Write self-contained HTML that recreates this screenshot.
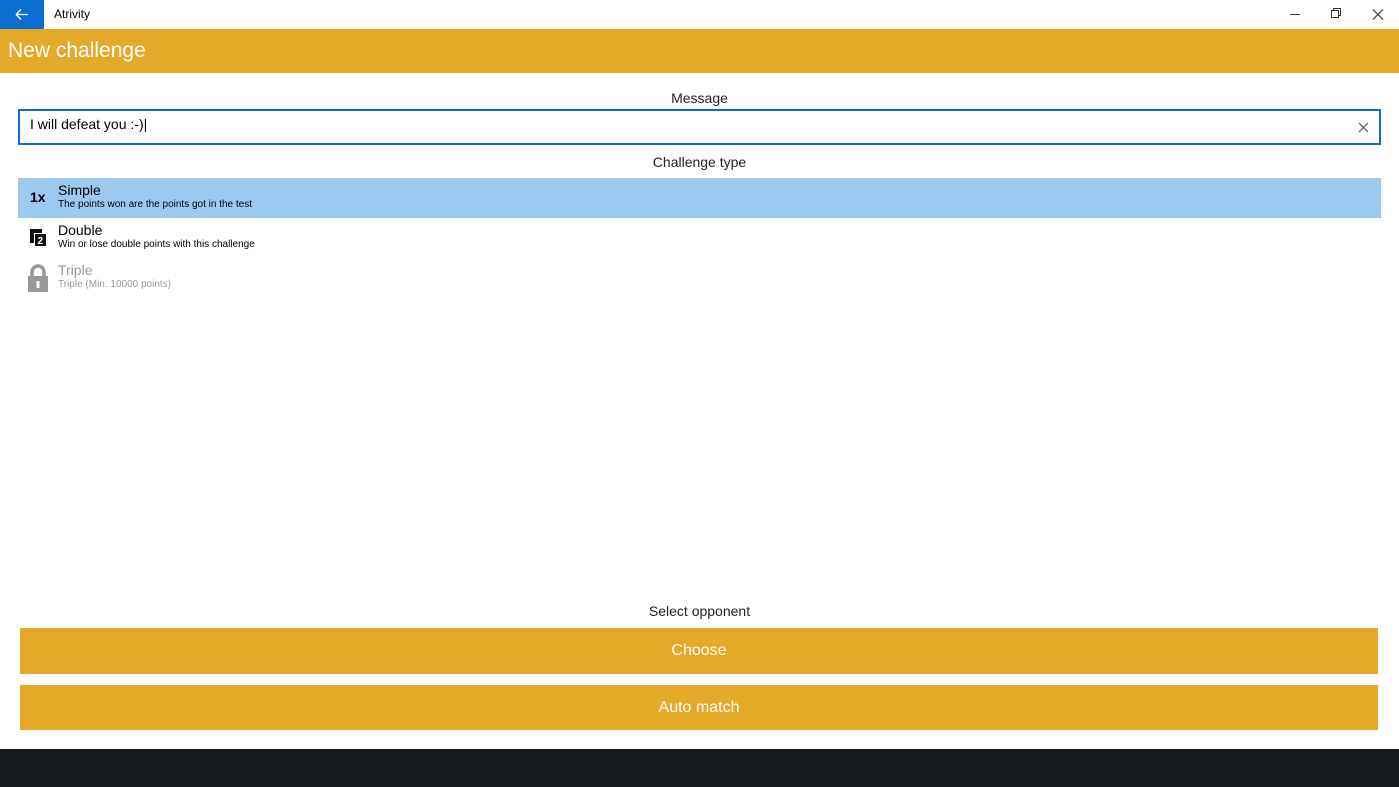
<!DOCTYPE html>
<html><head><meta charset="utf-8"><style>
*{margin:0;padding:0;box-sizing:border-box}
body{width:1399px;height:787px;overflow:hidden;background:#fff;font-family:"Segoe UI","Liberation Sans",sans-serif;position:relative;color:#000}
.abs{position:absolute}
.back{left:0;top:0;width:44px;height:29px;background:#0a6fd1}
.title{left:54px;top:7px;font-size:12px}
.hdr{left:0;top:29px;width:1399px;height:44px;background:#e4a928}
.hdr span{position:absolute;left:8px;top:10px;color:#fff;font-size:21px}
.lbl{width:1399px;text-align:center;font-size:14px;color:#222}
.input{left:18px;top:109px;width:1363px;height:36px;border:2px solid #0a6fd1}
.input span{position:absolute;left:10px;top:5px;font-size:14px}
.row{left:18px;width:1363px;height:40px}
.row .t{position:absolute;left:40px;top:4px;font-size:14px}
.row .s{position:absolute;left:40px;top:21px;font-size:10px}
.btn{left:20px;width:1358px;height:46px;background:#e4a928;color:#fff;font-size:16px;text-align:center;line-height:45px}
.foot{left:0;top:749px;width:1399px;height:38px;background:#151b1f}
</style></head><body>
<div class="abs back"><svg width="44" height="29"><path d="M16 14.5h12M16 14.5l5-5M16 14.5l5 5" stroke="#fff" stroke-width="1.3" fill="none"/></svg></div>
<div class="abs title">Atrivity</div>
<svg class="abs" style="left:1280px;top:0" width="119" height="29">
<path d="M10 14.5h10" stroke="#333" stroke-width="1"/>
<rect x="51.5" y="10.5" width="7" height="7" stroke="#333" fill="none"/><path d="M53.5 10.5v-2h7v7h-2" stroke="#333" fill="none"/>
<path d="M93 9.5l10 10M103 9.5l-10 10" stroke="#333" stroke-width="1.2"/>
</svg>
<div class="abs hdr"><span>New challenge</span></div>
<div class="abs lbl" style="top:90px">Message</div>
<div class="abs input"><span>I will defeat you :-)|</span>
<svg style="position:absolute;right:10px;top:11px" width="11" height="11"><path d="M1 1l9 9M10 1l-9 9" stroke="#555" stroke-width="1.2"/></svg></div>
<div class="abs lbl" style="top:154px">Challenge type</div>
<div class="abs row" style="top:178px;background:#9bc9ef">
<div class="abs" style="left:12px;top:11px;font-weight:bold;font-size:14px">1x</div>
<div class="t">Simple</div><div class="s">The points won are the points got in the test</div></div>
<div class="abs row" style="top:218px">
<svg class="abs" style="left:11px;top:10px" width="18" height="20"><path d="M1 1h12v4H5v10H1z" fill="#111"/><rect x="6" y="6" width="11" height="12" fill="#111"/><text x="8.5" y="16" font-size="10" font-weight="bold" fill="#fff" font-family="Liberation Sans">2</text></svg>
<div class="t">Double</div><div class="s">Win or lose double points with this challenge</div></div>
<div class="abs row" style="top:258px;color:#999">
<svg class="abs" style="left:8px;top:4px" width="24" height="32"><path d="M6 14v-4a6 6 0 0 1 12 0v4" stroke="#999" stroke-width="3.5" fill="none"/><rect x="2" y="14" width="20" height="16" fill="#999"/><rect x="10.5" y="19" width="3" height="7" fill="#fff"/></svg>
<div class="t">Triple</div><div class="s">Triple (Min. 10000 points)</div></div>
<div class="abs lbl" style="top:603px">Select opponent</div>
<div class="abs btn" style="top:628px">Choose</div>
<div class="abs btn" style="top:685px;height:45px">Auto match</div>
<div class="abs foot"></div>
</body></html>
